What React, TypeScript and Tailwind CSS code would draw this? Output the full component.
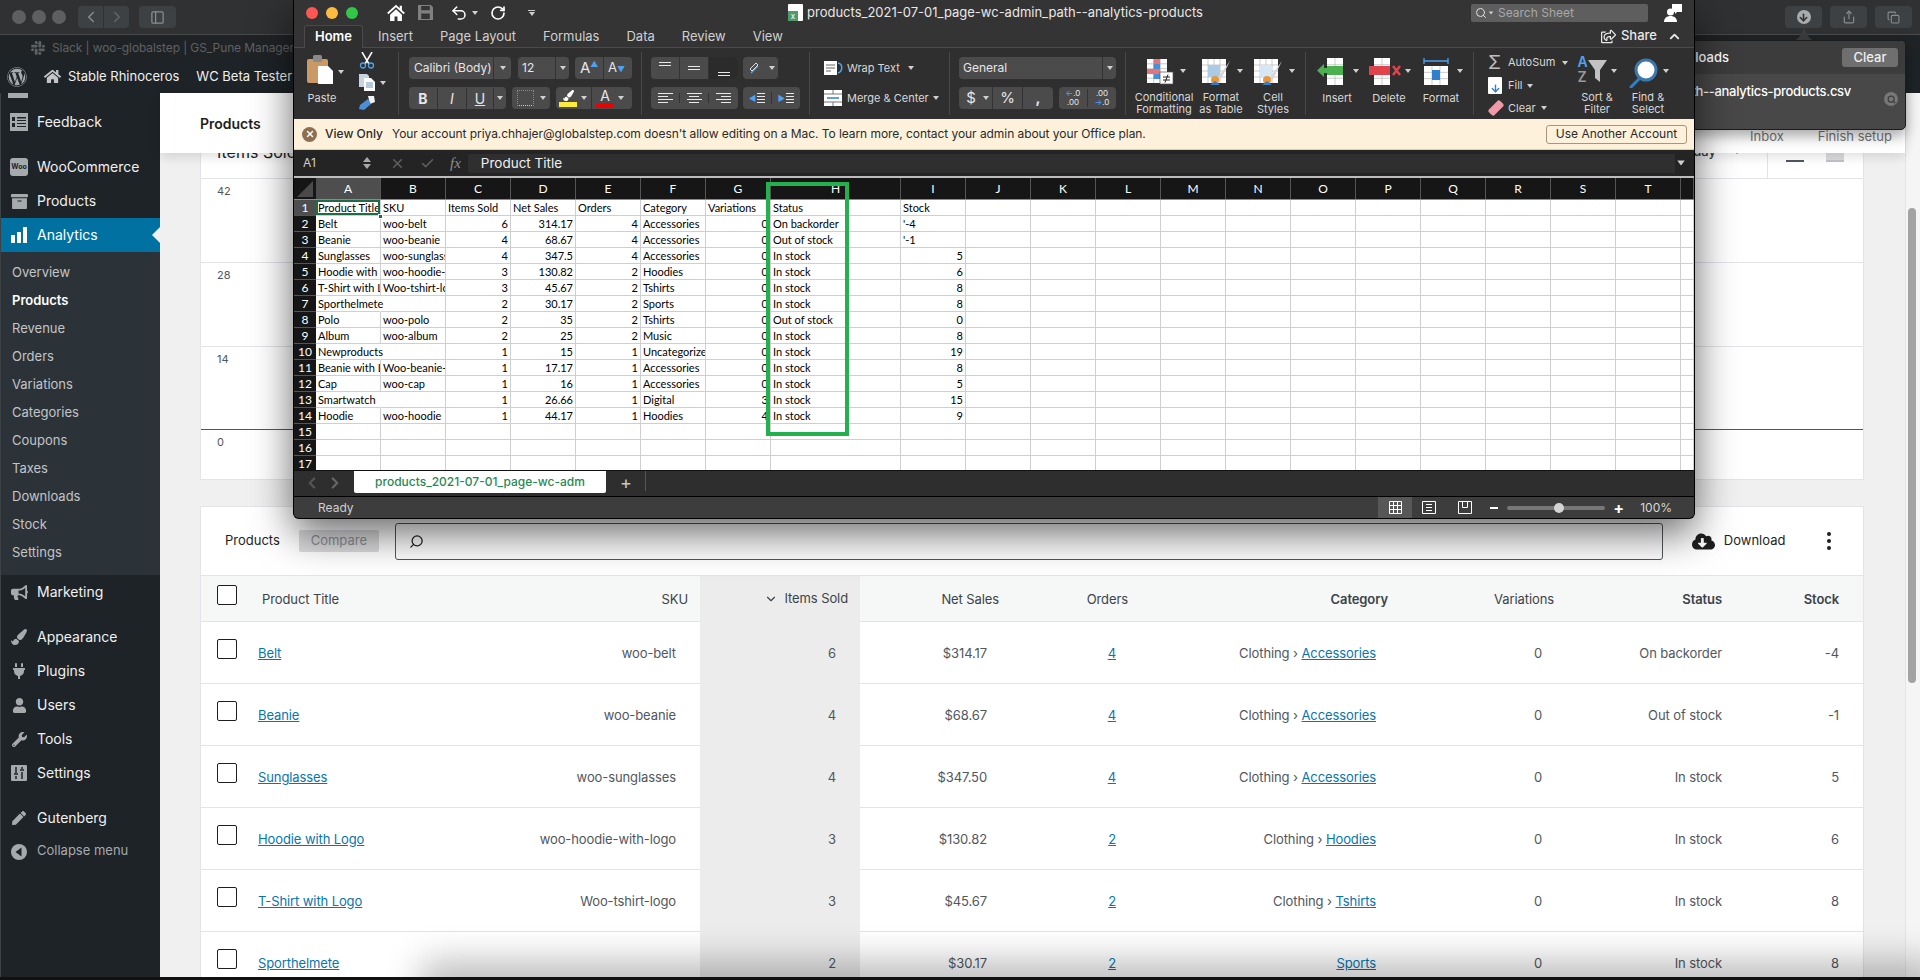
import { ReactNode } from "react";
import {
  ArrowDown,
  ChevronDown,
  ChevronUp,
  Copy,
  MoreVertical,
  RotateCcw,
  Search,
  Share,
  Undo2,
  Check,
  X,
  ChevronLeft,
  ChevronRight,
  PanelLeft,
} from "lucide-react";
import {
  FaArchive,
  FaBullhorn,
  FaCloudDownloadAlt,
  FaHome,
  FaPaintBrush,
  FaPen,
  FaPlug,
  FaRegShareSquare,
  FaSlack,
  FaUser,
  FaWordpress,
  FaWrench,
} from "react-icons/fa";

const Caret = ({ className = "" }: { className?: string }) => (
  <span className={`inline-block w-0 h-0 border-x-[3px] border-x-transparent border-t-[4px] border-t-[#d0d0d0] ${className}`} />
);

/* ---------- sidebar ---------- */

const BarsIcon = () => (
  <svg width="18" height="18" viewBox="0 0 18 18" fill="white">
    <rect x="1" y="9" width="4" height="8" />
    <rect x="7" y="6" width="4" height="11" />
    <rect x="13" y="1" width="4" height="16" />
  </svg>
);

const FormIcon = () => (
  <svg width="18" height="18" viewBox="0 0 18 18" fill="#a7aaad">
    <path d="M0 0h18v18H0zM2 4v4h3V4zm5 0v1.5h9V4zm0 3v1h9V7zM2 10v4h3v-4zm5 0v1h9v-1zm0 3v1h9v-1z" fillRule="evenodd" />
  </svg>
);

const WooIcon = () => (
  <div className="w-[19px] h-[18px] rounded-[3px] bg-[#a7aaad] flex items-center justify-center text-[7px] font-bold text-[#1d2327]">Woo</div>
);

const SlidersIcon = () => (
  <svg width="16" height="16" viewBox="0 0 16 16">
    <rect width="16" height="16" rx="1" fill="#a7aaad" />
    <path d="M5 2v6M5 11v3M3 9h4M11 2v2M11 7v7M9 5h4" stroke="#1d2327" strokeWidth="1.5" />
  </svg>
);

const CollapseIcon = () => (
  <svg width="16" height="16" viewBox="0 0 16 16">
    <circle cx="8" cy="8" r="8" fill="#a7aaad" />
    <path d="M10.5 3.5v9L4.5 8z" fill="#1d2327" />
  </svg>
);

const MenuItem = ({ icon, label, className = "" }: { icon: ReactNode; label: string; className?: string }) => (
  <div className={`flex items-center h-[34px] pl-[9px] text-[14px] text-[#f0f0f1] ${className}`}>
    <span className="w-[18px] flex justify-center text-[#a7aaad]">{icon}</span>
    <span className="ml-[9px] -mt-[2px]">{label}</span>
  </div>
);

const submenu = ["Overview", "Products", "Revenue", "Orders", "Variations", "Categories", "Coupons", "Taxes", "Downloads", "Stock", "Settings"];

const Sidebar = () => (
  <aside className="w-[160px] shrink-0 bg-[#1d2327] border-l border-[#3c4145] flex flex-col">
    <div className="h-[12px]">
      <div className="w-[20px] h-[5px] ml-[7px] bg-[#a7aaad]" />
    </div>
    <MenuItem icon={<FormIcon />} label="Feedback" />
    <div className="h-[11px]" />
    <MenuItem icon={<WooIcon />} label="WooCommerce" />
    <MenuItem icon={<FaArchive size={17} />} label="Products" />
    <div className="relative bg-[#0071a1]">
      <MenuItem icon={<BarsIcon />} label="Analytics" className="text-white" />
      <span className="absolute right-0 top-[9px] w-0 h-0 border-y-[8px] border-y-transparent border-r-[8px] border-r-[#f0f0f1]" />
    </div>
    <div className="bg-[#2c3338] pt-[7px] pb-[8px]">
      {submenu.map((s) => (
        <div key={s} className={`h-[28px] flex items-center pl-[11px] text-[13px] ${s === "Products" ? "font-semibold text-white" : "text-[#c3c4c7]"}`}>
          {s}
        </div>
      ))}
    </div>
    <MenuItem icon={<FaBullhorn size={17} />} label="Marketing" />
    <div className="h-[11px]" />
    <MenuItem icon={<FaPaintBrush size={16} />} label="Appearance" />
    <MenuItem icon={<FaPlug size={16} />} label="Plugins" />
    <MenuItem icon={<FaUser size={15} />} label="Users" />
    <MenuItem icon={<FaWrench size={15} />} label="Tools" />
    <MenuItem icon={<SlidersIcon />} label="Settings" />
    <div className="h-[11px]" />
    <MenuItem icon={<FaPen size={14} />} label="Gutenberg" />
    <MenuItem icon={<CollapseIcon />} label="Collapse menu" className="!text-[13px] !text-[#a7aaad]" />
  </aside>
);

/* ---------- wordpress page ---------- */

const products = [
  { title: "Belt", sku: "woo-belt", sold: 6, net: "$314.17", orders: 4, parent: true, cat: "Accessories", status: "On backorder", stock: "-4" },
  { title: "Beanie", sku: "woo-beanie", sold: 4, net: "$68.67", orders: 4, parent: true, cat: "Accessories", status: "Out of stock", stock: "-1" },
  { title: "Sunglasses", sku: "woo-sunglasses", sold: 4, net: "$347.50", orders: 4, parent: true, cat: "Accessories", status: "In stock", stock: "5" },
  { title: "Hoodie with Logo", sku: "woo-hoodie-with-logo", sold: 3, net: "$130.82", orders: 2, parent: true, cat: "Hoodies", status: "In stock", stock: "6" },
  { title: "T-Shirt with Logo", sku: "Woo-tshirt-logo", sold: 3, net: "$45.67", orders: 2, parent: true, cat: "Tshirts", status: "In stock", stock: "8" },
  { title: "Sporthelmete", sku: "", sold: 2, net: "$30.17", orders: 2, parent: false, cat: "Sports", status: "In stock", stock: "8" },
];

const tableCols = "grid grid-cols-[49px_250px_200px_160px_151px_129px_260px_166px_168px_1fr]";
const Link = ({ children }: { children: ReactNode }) => <a className="text-[#0675b0] underline">{children}</a>;

const ProductsTable = () => (
  <section className="mt-[26px] bg-white border border-[#e2e4e7] rounded-t-[2px]">
    <div className="h-[69px] flex items-center border-b border-[#e2e4e7] text-[13px]">
      <span className="ml-[24px] text-[#1e1e1e]">Products</span>
      <span className="ml-[19px] w-[80px] h-[22px] rounded-[2px] bg-[#dcdcde] text-[#8c8f94] flex items-center justify-center">Compare</span>
      <div className="ml-[16px] w-[1268px] h-[37px] border border-[#50575e] rounded-[3px] flex items-center pl-[13px]">
        <Search size={15} className="text-[#1e1e1e] -scale-x-100" />
      </div>
      <FaCloudDownloadAlt size={23} className="ml-[29px] text-[#1e1e1e]" />
      <span className="ml-[9px] text-[#1e1e1e]">Download</span>
      <MoreVertical size={24} className="ml-[32px] text-[#1e1e1e]" />
    </div>
    <div className={`${tableCols} h-[46px] border-b border-[#e2e4e7] bg-[#f6f7f7] text-[13px] tracking-[-0.1px] text-[#3c434a]`}>
      <div className="pl-[16px] pt-[9px]">
        <span className="block w-[20px] h-[20px] border border-[#1e1e1e] rounded-[2px] bg-white" />
      </div>
      <div className="pl-[12px] leading-[46px]">Product Title</div>
      <div className="pr-[12px] text-right leading-[46px]">SKU</div>
      <div className="pr-[12px] bg-[#ececec] flex items-center justify-end gap-[6px]">
        <ChevronDown size={14} strokeWidth={2} />
        Items Sold
      </div>
      <div className="pr-[12px] text-right leading-[46px]">Net Sales</div>
      <div className="pr-[12px] text-right leading-[46px]">Orders</div>
      <div className="pr-[12px] text-right leading-[46px] font-semibold">Category</div>
      <div className="pr-[12px] text-right leading-[46px]">Variations</div>
      <div className="pr-[12px] text-right leading-[46px] font-semibold">Status</div>
      <div className="pr-[24px] text-right leading-[46px] font-semibold">Stock</div>
    </div>
    {products.map((p) => (
      <div key={p.title} className={`${tableCols} h-[62px] border-b border-[#e2e4e7] text-[13px] tracking-[-0.1px] text-[#50575e] leading-[62px]`}>
        <div className="pl-[16px] pt-[17px]">
          <span className="block w-[20px] h-[20px] border border-[#1e1e1e] rounded-[2px] bg-white" />
        </div>
        <div className="pl-[8px]"><Link>{p.title}</Link></div>
        <div className="pr-[24px] text-right">{p.sku}</div>
        <div className="pr-[24px] text-right bg-[#ececec]">{p.sold}</div>
        <div className="pr-[24px] text-right">{p.net}</div>
        <div className="pr-[24px] text-right"><Link>{p.orders}</Link></div>
        <div className="pr-[24px] text-right">
          {p.parent && "Clothing › "}
          <Link>{p.cat}</Link>
        </div>
        <div className="pr-[24px] text-right">0</div>
        <div className="pr-[12px] text-right">{p.status}</div>
        <div className="pr-[24px] text-right">{p.stock}</div>
      </div>
    ))}
  </section>
);

const ChartCard = () => (
  <section className="mt-[32px] bg-white border border-[#e2e4e7]">
    <div className="h-[53px] flex items-center border-b border-[#e2e4e7]">
      <span className="ml-[16px] text-[16px] text-[#1e1e1e]">Items Sold</span>
      <span className="ml-auto text-[13px] font-medium text-[#3c434a]">By day</span>
      <Caret className="ml-[18px] !border-t-[#3c434a]" />
      <div className="ml-[27px] w-[96px] h-full border-l border-[#e2e4e7] flex items-start gap-[22px] pl-[18px] pt-[22px]">
        <span className="w-[18px] h-[14px] border-b-2 border-[#50575e]" />
        <span className="w-[18px] h-[14px] border-b-2 border-[#c3c4c7] bg-[#dcdcde]" />
      </div>
    </div>
    <div className="h-[84px] pl-[16px] pt-[4px] text-[11px] text-[#50575e] border-b border-[#e2e4e7]">42</div>
    <div className="h-[84px] pl-[16px] pt-[4px] text-[11px] text-[#50575e] border-b border-[#e2e4e7]">28</div>
    <div className="h-[83px] pl-[16px] pt-[4px] text-[11px] text-[#50575e] border-b border-[#50575e]">14</div>
    <div className="h-[49px] pl-[16px] pt-[4px] text-[11px] text-[#50575e]">0</div>
  </section>
);

const Main = () => (
  <main className="relative flex-1 pl-[40px] pr-[41px] bg-[#f0f0f1]">
    <header className="absolute left-0 right-0 top-0 z-10 h-[60px] bg-white flex items-center pl-[40px] text-[13px] text-[#757575] shadow-[0_4px_10px_rgba(0,0,0,0.12)]">
      <span className="text-[14px] font-semibold text-[#1e1e1e]">Products</span>
      <span className="ml-auto pt-[27px]">Inbox</span>
      <span className="ml-[34px] mr-[13px] pt-[27px]">Finish setup</span>
    </header>
    <ChartCard />
    <ProductsTable />
  </main>
);

const ScrollTrack = () => (
  <div className="w-[15px] shrink-0 bg-[#f5f5f5] border-l border-[#e4e4e4] pl-[2px]">
    <div className="mt-[115px] w-[8px] h-[475px] rounded-full bg-[#a3a3a3]" />
  </div>
);

/* ---------- browser chrome ---------- */

const SafariBar = () => (
  <div className="h-[35px] bg-[#2f3133] border-b border-[#47494b] flex items-center pl-[12px] text-[#8a8c8e]">
    <span className="w-[14px] h-[14px] rounded-full bg-[#5d5f61]" />
    <span className="ml-[6px] w-[14px] h-[14px] rounded-full bg-[#5d5f61]" />
    <span className="ml-[6px] w-[14px] h-[14px] rounded-full bg-[#5d5f61]" />
    <span className="ml-[12px] w-[25px] h-[22px] rounded-l-[4px] bg-[#3e4143] flex items-center justify-center"><ChevronLeft size={18} /></span>
    <span className="ml-[1px] w-[25px] h-[22px] rounded-r-[4px] bg-[#3e4143] flex items-center justify-center text-[#636567]"><ChevronRight size={18} /></span>
    <span className="ml-[10px] w-[37px] h-[22px] rounded-[4px] bg-[#3e4143] flex items-center justify-center"><PanelLeft size={15} /></span>
    <div className="ml-auto mr-[8px] flex gap-[8px]">
      <span className="w-[37px] h-[22px] rounded-[4px] bg-[#3e4143] flex items-center justify-center">
        <span className="w-[14px] h-[14px] rounded-full bg-[#a9abad] flex items-center justify-center">
          <ArrowDown size={11} strokeWidth={3.5} className="text-[#2f3133]" />
        </span>
      </span>
      <span className="w-[37px] h-[22px] rounded-[4px] bg-[#3e4143] flex items-center justify-center"><Share size={14} /></span>
      <span className="w-[37px] h-[22px] rounded-[4px] bg-[#3e4143] flex items-center justify-center"><Copy size={13} /></span>
    </div>
  </div>
);

const TabRow = () => (
  <div className="h-[25px] bg-[#202325] flex items-center pl-[30px] text-[12px] tracking-[-0.1px] text-[#5e6163]">
    <FaSlack size={16} />
    <span className="ml-[6px]">Slack | woo-globalstep | GS_Pune Management</span>
  </div>
);

const AdminBar = () => (
  <div className="h-[33px] bg-[#1d2327] flex items-center pl-[7px] text-[13px] text-[#f0f0f1]">
    <FaWordpress size={20} className="text-[#a7aaad]" />
    <FaHome size={17} className="ml-[17px] text-[#c3c4c7]" />
    <span className="ml-[7px]">Stable Rhinoceros</span>
    <span className="ml-[17px]">WC Beta Tester</span>
  </div>
);

const DownloadsPopover = () => (
  <>
    <svg className="absolute left-[1789px] top-[28px] z-20" width="30" height="13" viewBox="0 0 30 13" fill="#3c3c3c">
      <path d="M0 13c6 0 8-1 11-5l4-8 4 8c3 4 5 5 11 5z" />
    </svg>
    <div className="absolute left-[1640px] top-[40px] z-20 w-[266px] h-[90px] rounded-[5px] border border-[#1c1c1c] bg-[#484848] shadow-[0_6px_14px_rgba(0,0,0,0.35)] text-[13px] text-white font-medium overflow-hidden">
      <div className="h-[33px] bg-[#3c3c3c] flex items-center">
        <span className="ml-[-8px] w-[96px] text-right">Downloads</span>
        <span className="ml-auto mr-[7px] w-[56px] h-[19px] rounded-[3px] bg-[#6f6f6f] flex items-center justify-center text-[#f0f0f0]">Clear</span>
      </div>
      <div className="relative h-[52px]">
        <span className="absolute right-[54px] top-[8px] whitespace-nowrap tracking-[-0.3px]">products_2021-07-01_page-wc-admin_path--analytics-products.csv</span>
        <span className="absolute right-[7px] top-[18px] w-[14px] h-[14px] rounded-full bg-[#777] flex items-center justify-center">
          <Search size={9} strokeWidth={3} className="text-[#3c3c3c]" />
        </span>
      </div>
    </div>
  </>
);

/* ---------- excel ribbon icons ---------- */

const HomeGlyph = () => (
  <svg width="18" height="17" viewBox="0 0 24 23" fill="white">
    <path d="M12 1 0 12l1.7 1.8L12 4.5l10.3 9.3L24 12l-4-3.6V2.5h-3v3.2z" />
    <path d="M4 14.5 12 7l8 7.500V23h-6v-6h-4v6H4z" />
  </svg>
);

const SaveGlyph = () => (
  <svg width="15" height="15" viewBox="0 0 14 14" fill="#808080">
    <path d="M0 0h12l2 2v12H0zm3 1v4h8V1zm0 7v5h8V8z" fillRule="evenodd" />
  </svg>
);

const PersonGlyph = () => (
  <svg width="18" height="18" viewBox="0 0 18 18" fill="white">
    <path d="M8 0h10v8h-5l-2 2V8H8z" />
    <circle cx="6.5" cy="8" r="3.5" />
    <path d="M0 18c0-4 3-6 6.500-6s6.500 2 6.500 6z" />
  </svg>
);

const PasteGlyph = () => (
  <svg width="28" height="29" viewBox="0 0 28 29">
    <rect x="0" y="4" width="21" height="24" rx="2" fill="#c99a66" />
    <rect x="6" y="0" width="9" height="7" rx="1.5" fill="#8a8a8a" />
    <path d="M11 11h10l5 5v13H11z" fill="white" />
  </svg>
);

const CutGlyph = () => (
  <svg width="16" height="17" viewBox="0 0 16 17" fill="none">
    <path d="M3 0l7 12M13 0L6 12" stroke="white" strokeWidth="1.5" />
    <circle cx="4" cy="13.5" r="2.5" stroke="#4da3f0" strokeWidth="1.3" />
    <circle cx="12" cy="13.5" r="2.5" stroke="#4da3f0" strokeWidth="1.3" />
  </svg>
);

const CopyGlyph = () => (
  <svg width="16" height="17" viewBox="0 0 16 17">
    <path d="M0 0h8l2 2v11H0z" fill="#c8d4e2" />
    <path d="M5 4h7l4 4v9H5z" fill="white" />
    <path d="M7 9h7M7 11h7M7 13h7" stroke="#6f93b8" />
  </svg>
);

const BrushGlyph = () => (
  <svg width="16" height="14" viewBox="0 0 16 14">
    <path d="M9 0h6l1 6-5 2z" fill="#f2f2f2" />
    <path d="M9 3L1 9l-1 4 5 1 7-6z" fill="#4a90d9" />
  </svg>
);

const Lines = ({ rows, align = "left" }: { rows: number[]; align?: "left" | "center" | "right" }) => (
  <span className={`flex flex-col gap-[2px] ${align === "center" ? "items-center" : align === "right" ? "items-end" : "items-start"}`}>
    {rows.map((w, i) => (
      <span key={i} className="block h-[1px] bg-[#e8e8e8]" style={{ width: w }} />
    ))}
  </span>
);

const Seg = ({ className = "", children }: { className?: string; children: ReactNode }) => (
  <div className={`h-[22px] rounded-[4px] bg-[#4b4b4b] flex items-center text-[#e6e6e6] shrink-0 ${className}`}>{children}</div>
);

const Cellgrid = ({ children }: { children: ReactNode }) => (
  <svg width="34" height="27" viewBox="0 0 34 27">{children}</svg>
);

const GridLines = ({ x, y, w, h, cols, rows }: { x: number; y: number; w: number; h: number; cols: number; rows: number }) => (
  <g>
    <rect x={x} y={y} width={w} height={h} fill="white" />
    {Array.from({ length: cols - 1 }, (_, i) => (
      <path key={i} d={`M${x + ((i + 1) * w) / cols} ${y}v${h}`} stroke="#b5b5b5" strokeWidth=".7" />
    ))}
    {Array.from({ length: rows - 1 }, (_, i) => (
      <path key={i} d={`M${x} ${y + ((i + 1) * h) / rows}h${w}`} stroke="#b5b5b5" strokeWidth=".7" />
    ))}
  </g>
);

const CondIcon = () => (
  <Cellgrid>
    <GridLines x={4} y={1} w={20} h={24} cols={3} rows={5} />
    <rect x={10.5} y={1} width={6.5} height={5} fill="#e7737c" />
    <rect x={10.5} y={6} width={6.5} height={5} fill="#4a90d9" />
    <rect x={4} y={11} width={13} height={5} fill="#e7737c" />
    <rect x={10.5} y={16} width={6.5} height={5} fill="#4a90d9" />
    <rect x={17} y={14} width={13} height={12} fill="white" stroke="#555" strokeWidth=".7" />
    <path d="M20 19h7M20 22h7M25 16.5l-3 8" stroke="#222" strokeWidth="1" />
  </Cellgrid>
);

const TableIcon = ({ tint = "#a9cbe8" }: { tint?: string }) => (
  <Cellgrid>
    <GridLines x={2} y={1} w={24} h={24} cols={4} rows={4} />
    <rect x={8} y={7} width={12} height={12} fill={tint} />
    <path d="M30 3 L17 21 L20 23 Z" fill="#d6d6d6" />
    <circle cx={15} cy={22} r={4} fill="#e8973a" />
    <path d="M10 27h10l-5-4z" fill="#2f7fd0" />
  </Cellgrid>
);

const InsertIcon = () => (
  <Cellgrid>
    <GridLines x={11} y={0} w={16} h={27} cols={2} rows={4} />
    <rect x={11} y={8} width={16} height={9} fill="#4caf50" />
    <path d="M1 12.5 8 6v4h3v5H8v4z" fill="#4caf50" />
  </Cellgrid>
);

const DeleteIcon = () => (
  <Cellgrid>
    <GridLines x={6} y={0} w={16} h={27} cols={2} rows={4} />
    <rect x={1} y={8} width={21} height={9} fill="#e0434b" />
    <path d="M25 8l7 9M32 8l-7 9" stroke="#e0434b" strokeWidth="2.5" />
  </Cellgrid>
);

const FormatIcon = () => (
  <Cellgrid>
    <path d="M4 3h24M4 0v6M28 0v6M10 3h12" stroke="#4da3f0" strokeWidth="1.3" />
    <GridLines x={4} y={8} w={24} h={19} cols={3} rows={3} />
    <rect x={12} y={12} width={8} height={10} fill="#2f7fd0" />
  </Cellgrid>
);

const SortIcon = () => (
  <span className="relative flex items-start w-[30px] h-[26px]">
    <span className="absolute left-0 top-[-3px] text-[14px] leading-[14px] font-semibold text-[#4da3f0]">A</span>
    <span className="absolute left-0 top-[12px] text-[14px] leading-[14px] font-semibold text-[#9a9a9a]">Z</span>
    <svg className="absolute left-[10px] top-0" width="20" height="26" viewBox="0 0 20 26">
      <path d="M0 2h19l-7 10v12l-5-4v-8z" fill="#c2c2c2" />
    </svg>
  </span>
);

const FindIcon = () => (
  <svg width="32" height="30" viewBox="0 0 32 30">
    <path d="M3 29l9-9" stroke="#2f7fd0" strokeWidth="3" strokeLinecap="round" />
    <circle cx="18" cy="12" r="10" fill="white" stroke="#3b78ad" strokeWidth="3" />
  </svg>
);

const BigButton = ({ icon, lines, width, caret = true }: { icon: ReactNode; lines: string[]; width: number; caret?: boolean }) => (
  <div className="flex flex-col items-center shrink-0" style={{ width }}>
    <div className="h-[40px] pt-[6px] flex items-start gap-[3px]">
      {icon}
      {caret && <Caret className="mt-[11px]" />}
    </div>
    <div className="text-[11px] leading-[12px] text-center text-[#d8d8d8] whitespace-nowrap">
      {lines.map((l) => (
        <div key={l}>{l}</div>
      ))}
    </div>
  </div>
);

const Ribbon = () => (
  <div className="h-[71px] flex bg-[#2f2f2f] text-[#d8d8d8] text-[12px] py-[4px]">
    {/* clipboard */}
    <div className="w-[105px] border-r border-[#484848] flex pl-[14px]">
      <div className="flex flex-col items-center w-[36px]">
        <div className="flex items-start gap-[3px] pt-[3px] -ml-[2px]"><PasteGlyph /><Caret className="mt-[15px]" /></div>
        <span className="mt-[6px] text-[11px] -ml-[8px]">Paste</span>
      </div>
      <div className="ml-[15px] flex flex-col justify-between pb-[5px]">
        <CutGlyph />
        <div className="flex items-center gap-[5px]"><CopyGlyph /><Caret /></div>
        <BrushGlyph />
      </div>
    </div>
    {/* font */}
    <div className="w-[243px] border-r border-[#484848] pl-[10px] pt-[5px] flex flex-col gap-[8px]">
      <div className="flex gap-[7px]">
        <Seg className="w-[102px] pl-[5px]">Calibri (Body)<span className="ml-auto h-full border-l border-[#333] w-[18px] flex items-center justify-center"><Caret /></span></Seg>
        <Seg className="w-[51px] pl-[4px]">12<span className="ml-auto h-full border-l border-[#333] w-[14px] flex items-center justify-center"><Caret /></span></Seg>
        <Seg className="w-[57px] -ml-[1px]">
          <span className="w-[29px] pl-[5px] text-[15px] border-r border-[#333]">A<span className="text-[8px] text-[#4da3f0] align-super">▲</span></span>
          <span className="pl-[4px] text-[13px]">A<span className="text-[8px] text-[#4da3f0]">▼</span></span>
        </Seg>
      </div>
      <div className="flex gap-[6px]">
        <Seg className="w-[97px] text-[14px]">
          <span className="w-[29px] text-center font-bold border-r border-[#333]">B</span>
          <span className="w-[29px] text-center italic border-r border-[#333]">I</span>
          <span className="w-[27px] text-center underline border-r border-[#333]">U</span>
          <Caret className="ml-[3px]" />
        </Seg>
        <Seg className="w-[38px]">
          <span className="ml-[5px] w-[17px] h-[16px] border border-dotted border-[#8a8a8a] border-b-[#c8c8c8]" />
          <Caret className="ml-[6px]" />
        </Seg>
        <Seg className="w-[76px]">
          <span className="ml-[3px] flex flex-col items-center w-[18px]">
            <FaPaintBrush size={11} className="text-white" />
            <span className="w-[18px] h-[5px] mt-[1px] bg-[#ffeb3b]" />
          </span>
          <Caret className="ml-[4px]" />
          <span className="ml-[4px] h-full border-l border-[#333]" />
          <span className="ml-[4px] flex flex-col items-center w-[18px] text-[14px] leading-[13px]">
            A
            <span className="w-[18px] h-[5px] mt-[1px] bg-[#f00000]" />
          </span>
          <Caret className="ml-[4px]" />
        </Seg>
      </div>
    </div>
    {/* alignment */}
    <div className="w-[168px] border-r border-[#484848] pl-[9px] pt-[5px] flex flex-col gap-[8px]">
      <div className="flex gap-[5px]">
        <Seg className="w-[87px]">
          <span className="w-[29px] h-full flex justify-center pt-[5px] border-r border-[#333]"><Lines rows={[12, 12]} /></span>
          <span className="w-[29px] h-full flex justify-center items-center border-r border-[#333]"><Lines rows={[12, 12]} /></span>
          <span className="w-[29px] h-full flex justify-center items-end pb-[3px] bg-[#2b2b2b] rounded-r-[4px]"><Lines rows={[12, 12]} /></span>
        </Seg>
        <Seg className="w-[35px] pl-[6px]">
          <svg width="16" height="16" viewBox="0 0 16 16" fill="none"><path d="M2 13 9 6" stroke="#4da3f0" strokeWidth="1.5" /><path d="M1 9l6-6 2 2-6 6z" stroke="#ddd" /></svg>
          <Caret className="ml-[4px]" />
        </Seg>
      </div>
      <div className="flex gap-[5px]">
        <Seg className="w-[87px]">
          <span className="w-[29px] flex justify-center border-r border-[#333]"><Lines rows={[15, 10, 15, 10]} /></span>
          <span className="w-[29px] flex justify-center border-r border-[#333]"><Lines rows={[15, 10, 15, 10]} align="center" /></span>
          <span className="w-[29px] flex justify-center"><Lines rows={[15, 10, 15, 10]} align="right" /></span>
        </Seg>
        <Seg className="w-[57px]">
          <span className="w-[29px] flex justify-center items-center gap-[1px] border-r border-[#333]"><span className="text-[8px] text-[#4da3f0]">◀</span><Lines rows={[8, 8, 8, 8]} /></span>
          <span className="w-[28px] flex justify-center items-center gap-[1px]"><span className="text-[8px] text-[#4da3f0]">▶</span><Lines rows={[8, 8, 8, 8]} /></span>
        </Seg>
      </div>
    </div>
    {/* wrap / merge */}
    <div className="w-[140px] border-r border-[#484848] pl-[14px] pt-[8px] flex flex-col gap-[14px] text-[11px]">
      <div className="flex items-center h-[16px]">
        <svg width="20" height="14" viewBox="0 0 20 14" fill="none"><rect width="13" height="14" fill="white" /><path d="M2 4h9M2 7h9M2 10h5" stroke="#666" /><path d="M14 2c5 1 5 8 0 10" stroke="#4da3f0" strokeWidth="1.5" /></svg>
        <span className="ml-[3px]">Wrap Text</span>
        <Caret className="ml-[8px]" />
      </div>
      <div className="flex items-center h-[16px]">
        <svg width="20" height="16" viewBox="0 0 20 16" fill="none"><rect width="18" height="16" fill="white" /><path d="M0 4h18M0 12h18M9 0v4M9 12v4" stroke="#777" /><path d="M3 8h12" stroke="#2f7fd0" strokeWidth="1.5" /></svg>
        <span className="ml-[3px]">Merge &amp; Center</span>
        <Caret className="ml-[4px]" />
      </div>
    </div>
    {/* number */}
    <div className="w-[176px] border-r border-[#484848] pl-[9px] pt-[5px] flex flex-col gap-[8px]">
      <Seg className="w-[157px] pl-[4px]">General<span className="ml-auto h-full border-l border-[#333] w-[14px] flex items-center justify-center"><Caret /></span></Seg>
      <div className="flex gap-[6px]">
        <Seg className="w-[94px] text-[15px]">
          <span className="w-[24px] text-center">$</span>
          <Caret />
          <span className="ml-[3px] w-[31px] text-center border-x border-[#333]">%</span>
          <span className="w-[30px] text-center font-bold">,</span>
        </Seg>
        <Seg className="w-[57px] text-[8px] leading-[9px]">
          <span className="w-[29px] text-center border-r border-[#333]"><span className="text-[#4da3f0]">←</span>.0<br />.00</span>
          <span className="w-[28px] text-center">.00<br /><span className="text-[#4da3f0]">→</span>.0</span>
        </Seg>
      </div>
    </div>
    {/* styles */}
    <div className="w-[180px] border-r border-[#484848] flex pl-[6px]">
      <BigButton icon={<CondIcon />} lines={["Conditional", "Formatting"]} width={64} />
      <BigButton icon={<TableIcon />} lines={["Format", "as Table"]} width={50} />
      <BigButton icon={<TableIcon tint="#d7e6f5" />} lines={["Cell", "Styles"]} width={54} />
    </div>
    {/* cells */}
    <div className="w-[168px] border-r border-[#484848] flex pl-[5px]">
      <BigButton icon={<InsertIcon />} lines={["Insert"]} width={52} />
      <BigButton icon={<DeleteIcon />} lines={["Delete"]} width={52} />
      <BigButton icon={<FormatIcon />} lines={["Format"]} width={52} />
    </div>
    {/* editing */}
    <div className="flex-1 flex pl-[14px] text-[11px]">
      <div className="w-[86px] flex flex-col pt-[2px] gap-[6px]">
        <div className="flex items-center h-[17px]">
          <span className="w-[16px] text-[19px] leading-[17px] text-[#bdbdbd]">Σ</span>
          <span className="ml-[4px]">AutoSum</span>
          <Caret className="ml-[7px]" />
        </div>
        <div className="flex items-center h-[17px]">
          <span className="w-[14px] h-[17px] bg-white rounded-[1px] flex items-end justify-center"><ArrowDown size={11} strokeWidth={3} className="text-[#2f7fd0]" /></span>
          <span className="ml-[6px]">Fill</span>
          <Caret className="ml-[4px]" />
        </div>
        <div className="flex items-center h-[17px]">
          <span className="w-[16px] h-[8px] bg-[#ef9aa8] rounded-[2px] -rotate-45" />
          <span className="ml-[4px]">Clear</span>
          <Caret className="ml-[5px]" />
        </div>
      </div>
      <BigButton icon={<SortIcon />} lines={["Sort &", "Filter"]} width={46} />
      <BigButton icon={<FindIcon />} lines={["Find &", "Select"]} width={56} />
    </div>
  </div>
);

/* ---------- excel sheet ---------- */

type Cell = string | number | null;

const sheetRows: Cell[][] = [
  ["Product Title", "SKU", "Items Sold", "Net Sales", "Orders", "Category", "Variations", "Status", "Stock"],
  ["Belt", "woo-belt", 6, 314.17, 4, "Accessories", 0, "On backorder", "'-4"],
  ["Beanie", "woo-beanie", 4, 68.67, 4, "Accessories", 0, "Out of stock", "'-1"],
  ["Sunglasses", "woo-sunglasses", 4, 347.5, 4, "Accessories", 0, "In stock", 5],
  ["Hoodie with Logo", "woo-hoodie-with-logo", 3, 130.82, 2, "Hoodies", 0, "In stock", 6],
  ["T-Shirt with Logo", "Woo-tshirt-logo", 3, 45.67, 2, "Tshirts", 0, "In stock", 8],
  ["Sporthelmete", null, 2, 30.17, 2, "Sports", 0, "In stock", 8],
  ["Polo", "woo-polo", 2, 35, 2, "Tshirts", 0, "Out of stock", 0],
  ["Album", "woo-album", 2, 25, 2, "Music", 0, "In stock", 8],
  ["Newproducts", null, 1, 15, 1, "Uncategorized", 0, "In stock", 19],
  ["Beanie with Logo", "Woo-beanie-logo", 1, 17.17, 1, "Accessories", 0, "In stock", 8],
  ["Cap", "woo-cap", 1, 16, 1, "Accessories", 0, "In stock", 5],
  ["Smartwatch", null, 1, 26.66, 1, "Digital", 3, "In stock", 15],
  ["Hoodie", "woo-hoodie", 1, 44.17, 1, "Hoodies", 4, "In stock", 9],
  [],
  [],
  [],
];

const sheetCols = "grid grid-cols-[22px_repeat(7,65px)_130px_repeat(12,65px)_1fr]";
const letters = ["A", "B", "C", "D", "E", "F", "G", "H", "I", "J", "K", "L", "M", "N", "O", "P", "Q", "R", "S", "T", ""];

const Sheet = () => (
  <div className="relative h-[292px] overflow-hidden bg-white font-['Lato',sans-serif] text-[11px]">
    <div className={`${sheetCols} h-[22px] bg-[#161616] text-white text-[12px] border-b border-[#8a8a8a]`}>
      <div className="relative border-r border-[#161616]">
        <span className="absolute right-[2px] bottom-[2px] w-0 h-0 border-l-[16px] border-l-transparent border-b-[16px] border-b-[#4a4a4a]" />
      </div>
      {letters.map((l, i) => (
        <div key={i} className={`flex items-center justify-center border-r border-[#555] ${l === "A" ? "bg-[#4e4e4e]" : ""}`}>{l}</div>
      ))}
    </div>
    {sheetRows.map((row, r) => (
      <div key={r} className={`${sheetCols} h-[16px] leading-[15px]`}>
        <div className={`text-center text-white text-[12px] border-b border-[#555] ${r === 0 ? "bg-[#4e4e4e]" : "bg-[#161616]"}`}>{r + 1}</div>
        {letters.map((_, c) => {
          const v = row[c] ?? null;
          const spills = c === 0 && row[1] === null;
          return (
            <div
              key={c}
              className={`relative border-r border-b border-[#cfcfcf] px-[2px] whitespace-nowrap text-black ${spills ? "" : "overflow-hidden"} ${typeof v === "number" ? "text-right" : ""} ${spills ? "border-r-transparent" : ""}`}
            >
              {v}
              {r === 0 && c === 0 && <span className="absolute inset-0 border-2 border-[#1f6b45]" />}
            </div>
          );
        })}
      </div>
    ))}
    {/* selected cell handle + green highlight drawn on top of the grid */}
    <span className="absolute left-[84px] top-[36px] w-[5px] h-[5px] bg-[#1f6b45] border border-white" />
    <div className="absolute left-[472px] top-[4px] w-[83px] h-[254px] border-4 border-[#22b14c]" />
  </div>
);

const ExcelWindow = () => (
  <div className="absolute left-[293px] top-0 z-30 w-[1402px] h-[519px] flex flex-col border-x border-b border-black rounded-b-[6px] overflow-hidden bg-[#2e2e2e] shadow-[0_14px_40px_rgba(0,0,0,0.6)] font-['Inter',sans-serif]">
    {/* title bar */}
    <div className="h-[25px] shrink-0 flex items-center pl-[12px] bg-[#343434] text-[#e8e8e8]">
      <span className="w-[12px] h-[12px] rounded-full bg-[#fc5753]" />
      <span className="ml-[8px] w-[12px] h-[12px] rounded-full bg-[#fdbc40]" />
      <span className="ml-[8px] w-[12px] h-[12px] rounded-full bg-[#33c748]" />
      <span className="ml-[29px]"><HomeGlyph /></span>
      <span className="ml-[13px]"><SaveGlyph /></span>
      <Undo2 size={18} className="ml-[17px] text-white" />
      <Caret className="ml-[4px]" />
      <RotateCcw size={16} strokeWidth={2.5} className="ml-[12px] text-white -scale-x-100" />
      <span className="ml-[22px] flex flex-col items-center gap-[1px]">
        <span className="w-[7px] h-[1px] bg-[#ccc]" />
        <Caret />
      </span>
      <span className="ml-[253px] w-[15px] h-[17px] bg-white rounded-[1px] flex items-end">
        <span className="w-[10px] h-[10px] bg-[#4e9b6f] text-white text-[8px] leading-[10px] text-center">x</span>
      </span>
      <span className="ml-[4px] text-[13px] whitespace-nowrap">products_2021-07-01_page-wc-admin_path--analytics-products</span>
      <div className="ml-auto w-[177px] h-[18px] rounded-[2px] bg-[#5e5e5e] flex items-center pl-[4px] text-[12px] text-[#a8a8a8]">
        <Search size={12} className="text-[#e0e0e0]" />
        <Caret className="ml-[1px] scale-75" />
        <span className="ml-[4px]">Search Sheet</span>
      </div>
      <span className="ml-[16px] mr-[12px]"><PersonGlyph /></span>
    </div>
    {/* tabs */}
    <div className="h-[23px] shrink-0 flex items-end pl-[10px] bg-[#343434] border-b border-[#4a4a4a] text-[13px] text-[#d0d0d0]">
      <span className="w-[59px] h-[23px] -mb-[1px] flex items-center justify-center bg-[#2f2f2f] border-x border-t border-[#4a4a4a] rounded-t-[3px] font-semibold text-white">Home</span>
      <span className="ml-[15px] h-[22px] leading-[22px]">Insert</span>
      <span className="ml-[27px] h-[22px] leading-[22px]">Page Layout</span>
      <span className="ml-[27px] h-[22px] leading-[22px]">Formulas</span>
      <span className="ml-[27px] h-[22px] leading-[22px]">Data</span>
      <span className="ml-[27px] h-[22px] leading-[22px]">Review</span>
      <span className="ml-[27px] h-[22px] leading-[22px]">View</span>
      <span className="ml-auto h-[22px] flex items-center font-medium text-[#e8e8e8]">
        <FaRegShareSquare size={15} />
        <span className="ml-[5px]">Share</span>
        <ChevronUp size={15} strokeWidth={3} className="ml-[10px] mr-[12px]" />
      </span>
    </div>
    <Ribbon />
    {/* view only banner */}
    <div className="h-[31px] shrink-0 flex items-center pl-[8px] bg-[#fdf1dc] border-b border-[#d8ccb8] text-[12px] text-[#2a2a2a]">
      <span className="w-[15px] h-[15px] rounded-full bg-[#8f6f52] flex items-center justify-center">
        <X size={10} strokeWidth={3.5} className="text-white" />
      </span>
      <span className="ml-[8px] font-medium">View Only</span>
      <span className="ml-[9px] tracking-[-0.06px]">Your account priya.chhajer@globalstep.com doesn't allow editing on a Mac. To learn more, contact your admin about your Office plan.</span>
      <span className="ml-auto mr-[7px] w-[141px] h-[19px] rounded-[3px] border border-[#a8957a] flex items-center justify-center">Use Another Account</span>
    </div>
    {/* formula bar */}
    <div className="h-[26px] shrink-0 flex items-center bg-[#242424] text-[#cfcfcf] text-[12px]">
      <span className="ml-[9px] w-[60px]">A1</span>
      <span className="flex flex-col gap-[2px]">
        <span className="w-0 h-0 border-x-[4px] border-x-transparent border-b-[5px] border-b-[#a8a8a8]" />
        <span className="w-0 h-0 border-x-[4px] border-x-transparent border-t-[5px] border-t-[#a8a8a8]" />
      </span>
      <X size={15} className="ml-[19px] text-[#5e5e5e]" strokeWidth={2.5} />
      <Check size={15} className="ml-[15px] text-[#5e5e5e]" strokeWidth={2.5} />
      <span className="ml-[15px] font-['Liberation_Serif',serif] italic text-[15px] text-[#8e8e8e]">fx</span>
      <div className="ml-[7px] w-[1207px] h-[19px] bg-[#2f2f2f] rounded-l-[2px] pl-[13px] text-[13.5px] leading-[19px] text-[#f0f0f0]">Product Title</div>
      <Caret className="ml-[3px] scale-125" />
    </div>
    <div className="h-[2px] shrink-0 bg-[#bdbdbd]" />
    <Sheet />
    {/* sheet tabs */}
    <div className="h-[26px] shrink-0 flex bg-[#2e2e2e] border-t border-[#111] text-[#7a7a7a]">
      <ChevronLeft size={18} strokeWidth={3} className="ml-[9px] mt-[3px] text-[#555]" />
      <ChevronRight size={18} strokeWidth={3} className="ml-[5px] mt-[3px] text-[#666]" />
      <span className="ml-[10px] w-[252px] h-[22px] bg-white rounded-b-[2px] text-[#1f8a52] text-[12px] font-medium flex items-center justify-center">products_2021-07-01_page-wc-adm</span>
      <span className="ml-[14px] text-[18px] leading-[24px] text-[#c8c8c8]">+</span>
      <span className="ml-[13px] h-[20px] border-l border-[#555]" />
    </div>
    {/* status bar */}
    <div className="flex-1 flex items-center bg-[#3d3d3d] border-t border-black text-[12px] text-[#cfcfcf]">
      <span className="ml-[24px]">Ready</span>
      <div className="ml-auto h-full flex items-center">
        <span className="w-[34px] h-full bg-[#575757] flex items-center justify-center">
          <svg width="13" height="13" viewBox="0 0 13 13" fill="none" stroke="white"><path d="M.5.5h12v12H.5zM4.500.5v12M8.500.5v12M.5 4.500h12M.5 8.500h12" /></svg>
        </span>
        <svg className="ml-[10px]" width="14" height="13" viewBox="0 0 14 13" fill="none" stroke="white"><path d="M.5.5h13v12H.5zM4 3.500h6M4 6.500h6M4 9.500h6" /></svg>
        <svg className="ml-[22px]" width="14" height="13" viewBox="0 0 14 13" fill="none" stroke="white"><path d="M.5.5h13v12H.5zM4.500.5v6h5v-6" /></svg>
        <span className="ml-[18px] w-[8px] h-[2px] bg-white" />
        <div className="ml-[9px] w-[98px] h-[4px] rounded-full bg-[#777] flex items-center">
          <span className="ml-[47px] w-[10px] h-[10px] rounded-full bg-[#d4d4d4]" />
        </div>
        <span className="ml-[8px] text-[16px] leading-[16px] font-bold text-white">+</span>
        <span className="ml-[16px] mr-[22px] text-[#d8d8d8]">100%</span>
      </div>
    </div>
  </div>
);

export default function App() {
  return (
    <div className="relative w-[1920px] h-[980px] overflow-hidden flex flex-col bg-[#f0f0f1] font-['Inter',sans-serif]">
      <SafariBar />
      <TabRow />
      <AdminBar />
      <div className="flex flex-1 min-h-0">
        <Sidebar />
        <Main />
        <ScrollTrack />
      </div>
      <DownloadsPopover />
      <ExcelWindow />
      {/* dock shadow at the bottom edge */}
      <div className="absolute left-[440px] right-0 bottom-[-8px] h-[8px] z-20 shadow-[0_0_36px_18px_rgba(0,0,0,0.28)]" />
      <div className="absolute left-0 right-0 bottom-0 h-[3px] z-20 bg-[#111]" />
    </div>
  );
}
